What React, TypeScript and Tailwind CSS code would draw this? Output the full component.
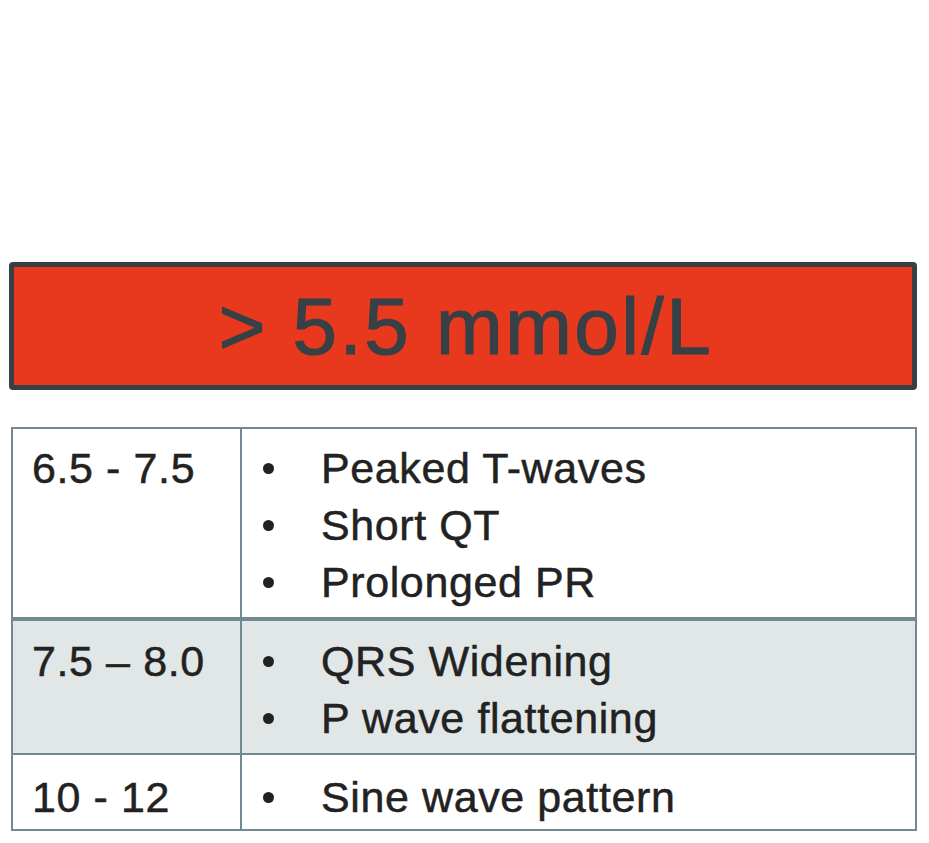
import React from "react";

const rows = [
  { range: "6.5 - 7.5", items: ["Peaked T-waves", "Short QT", "Prolonged PR"], bg: "bg-white", h: "h-[192px]", pt: "pt-[11px]", border: "border-b-[4px]" },
  { range: "7.5 – 8.0", items: ["QRS Widening", "P wave flattening"], bg: "bg-[#e1e7e7]", h: "h-[134px]", pt: "pt-[12px]", border: "border-b-[2px]" },
  { range: "10 - 12", items: ["Sine wave pattern"], bg: "bg-white", h: "h-[74px]", pt: "pt-[14px]", border: "" },
];

export default function App() {
  return (
    <div
      className="w-[929px] h-[843px] bg-white pt-[262px]"
      style={{ fontFamily: '"Liberation Sans", Arial, sans-serif' }}
    >
      <div className="ml-[9px] w-[908px] h-[128px] rounded-[4px] border-[5px] border-[#374045] bg-[#e8381d] flex items-center justify-center">
        <span className="text-[80px] leading-none tracking-[2.5px] text-[#374045] [-webkit-text-stroke:1.2px_#374045] pl-[6px] pt-[2px]">
          &gt; 5.5 mmol/L
        </span>
      </div>

      <div className="ml-[11px] mt-[37px] w-[906px] border-2 border-[#718990] text-[#222222] [-webkit-text-stroke:0.5px_#222222] text-[43px] leading-[57px] tracking-[0.6px]">
        {rows.map((r, i) => (
          <div key={i} className={`flex ${r.bg} ${r.h} ${r.border} border-[#718990]`}>
            <div className={`w-[229px] shrink-0 border-r-2 border-[#718990] pl-[19px] ${r.pt}`}>
              {r.range}
            </div>
            <div className={`flex-1 pl-[21px] ${r.pt}`}>
              {r.items.map((t) => (
                <div key={t} className="flex items-center">
                  <span className="w-[11px] h-[11px] rounded-full bg-[#222222] shrink-0" />
                  <span className="ml-[47px]">{t}</span>
                </div>
              ))}
            </div>
          </div>
        ))}
      </div>
    </div>
  );
}
